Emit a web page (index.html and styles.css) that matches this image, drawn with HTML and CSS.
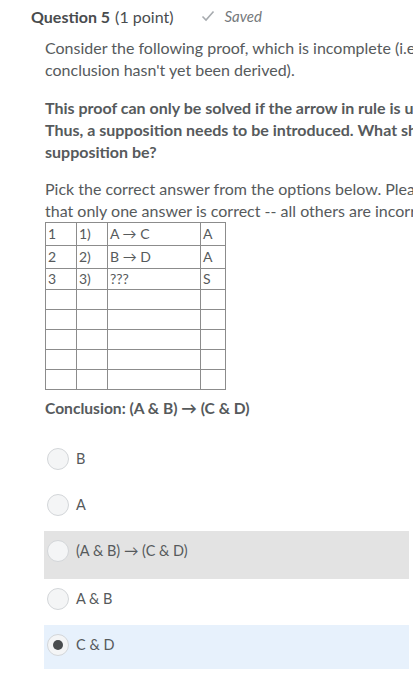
FILE: index.html
```html
<!DOCTYPE html>
<html lang="en">
  <head>
    <meta charset="UTF-8" />
    <meta name="viewport" content="width=device-width, initial-scale=1.0" />
    <title>Quiz</title>
    <link rel="stylesheet" href="styles.css">
  </head>
  <body>
    <div class="q-header">
      <span class="q-title">Question 5</span>
      <span class="q-points">(1 point)</span>
      <span class="saved">
        <svg width="16" height="14" viewBox="0 0 16 14">
          <path d="M2.5 7.5 L6 11 L13.5 2.5" fill="none" stroke="#a7abaf" stroke-width="1.6" />
        </svg>
        Saved
      </span>
    </div>

    <div class="q-body">
      <p class="text">Consider the following proof, which is incomplete (i.e. the<br>conclusion hasn't yet been derived).</p>

      <p class="text bold">This proof can only be solved if the arrow in rule is used.<br>Thus, a supposition needs to be introduced. What should the<br>supposition be?</p>

      <p class="text pick">Pick the correct answer from the options below. Please note<br>that only one answer is correct -- all others are incorrect.</p>

      <table class="proof">
        <tr class="tall"><td>1</td><td>1)</td><td>A → C</td><td>A</td></tr>
        <tr class="tall"><td>2</td><td>2)</td><td>B → D</td><td>A</td></tr>
        <tr class="mid"><td>3</td><td>3)</td><td>???</td><td>S</td></tr>
        <tr><td></td><td></td><td></td><td></td></tr>
        <tr><td></td><td></td><td></td><td></td></tr>
        <tr><td></td><td></td><td></td><td></td></tr>
        <tr><td></td><td></td><td></td><td></td></tr>
        <tr><td></td><td></td><td></td><td></td></tr>
      </table>

      <p class="text bold conclusion">Conclusion: (A &amp; B) → (C &amp; D)</p>

      <div class="options">
        <label class="option"><span class="radio"></span>B</label>
        <label class="option"><span class="radio"></span>A</label>
        <label class="option hover"><span class="radio"></span>(A &amp; B) → (C &amp; D)</label>
        <label class="option"><span class="radio"></span>A &amp; B</label>
        <label class="option selected"><span class="radio checked"></span>C &amp; D</label>
      </div>
    </div>

    <div class="q-header next">
      <span class="q-title">Question 6</span>
      <span class="q-points">(2 points)</span>
    </div>
  </body>
</html>
```

FILE: styles.css
```css
html,
body {
  overflow: hidden;
}
body {
  margin: 0;
  font-family: Lato, "Open Sans", sans-serif;
  color: #565a5c;
  background: #ffffff;
}
.q-header {
  height: 32px;
  padding-left: 31px;
  display: flex;
  align-items: center;
  white-space: nowrap;
}
.q-title {
  font-size: 16px;
  font-weight: bold;
  color: #494c4e;
}
.q-points {
  font-size: 16px;
  margin-left: 5px;
  color: #494c4e;
}
.saved {
  display: flex;
  align-items: center;
  margin-left: 27px;
  font-size: 15px;
  font-style: italic;
  color: #74787b;
}
.saved svg {
  margin-right: 8px;
}
.q-body {
  margin-left: 44px;
  width: 369px;
  overflow: hidden;
}
.text {
  margin: 5px 0 0;
  padding-left: 1px;
  font-size: 16px;
  line-height: 22px;
  white-space: nowrap;
}
.bold {
  font-weight: bold;
  margin-top: 16px;
}
.pick {
  margin-top: 15px;
}
.proof {
  border-collapse: collapse;
  margin-left: 1px;
  font-size: 14px;
  color: #565a5c;
}
.proof td {
  border: 1px solid #8c8c8c;
  padding: 0 0 0 2px;
  height: 19px;
  line-height: 16px;
}
.proof tr.tall td {
  height: 22px;
}
.proof tr.mid td {
  height: 20px;
}
.proof td:nth-child(1) {
  width: 28px;
}
.proof td:nth-child(2) {
  width: 28px;
}
.proof td:nth-child(3) {
  width: 90px;
}
.proof td:nth-child(4) {
  width: 22px;
}
.conclusion {
  margin-top: 7px;
  font-size: 15.6px;
}
.options {
  margin-top: 20px;
  width: 365px;
}
.option {
  display: flex;
  align-items: flex-start;
  height: 46px;
  box-sizing: border-box;
  padding: 9px 0 0 3px;
  font-size: 14.5px;
  line-height: 22px;
  white-space: nowrap;
}
.option.hover {
  background: #e3e3e3;
  height: 48px;
}
.option.selected {
  background: #e7f1fc;
  height: 44px;
}
.radio {
  width: 20px;
  height: 20px;
  border: 1px solid #d3d6d9;
  border-radius: 50%;
  background: #f4f5f6;
  margin-right: 7px;
  display: flex;
  align-items: center;
  justify-content: center;
}
.radio.checked::after {
  content: "";
  width: 10px;
  height: 10px;
  border-radius: 50%;
  background: #494c4e;
}
.next {
  margin-top: 22px;
}
```
